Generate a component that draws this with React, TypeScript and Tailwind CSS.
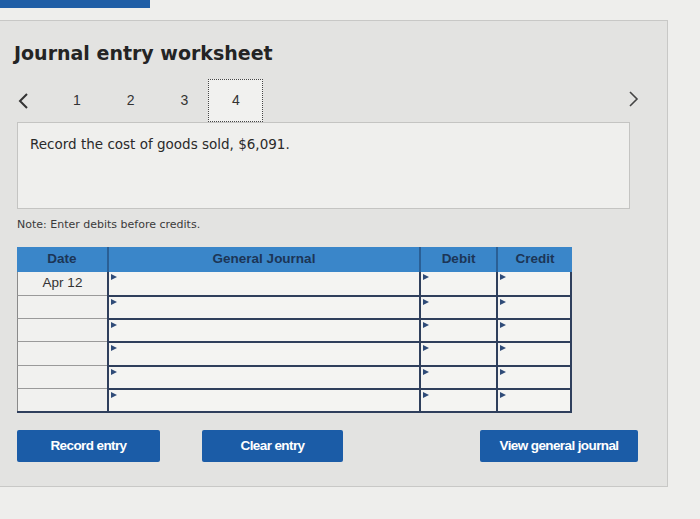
import React from 'react'

const ROWS = [0, 1, 2, 3, 4, 5]

function Flag() {
  return (
    <span className="absolute left-[2px] top-[2px] w-0 h-0 border-t-[3px] border-b-[3px] border-l-[6px] border-t-transparent border-b-transparent border-l-[#2f4b78]" />
  )
}

export default function App() {
  return (
    <div className="w-[700px] h-[519px] bg-[#eeeeec] overflow-hidden relative font-['DejaVu_Sans',sans-serif] text-[#2b2b2b]">
      {/* top bar */}
      <div className="w-[150px] h-[8px] bg-[#1f5ea6]" />

      {/* panel */}
      <div className="mt-[12px] w-[668px] h-[467px] bg-[#e3e3e1] border-t border-r border-b border-[#c8c8c6]">
        <h1 className="pl-[14px] pt-[18px] text-[19px] font-bold leading-[28px] text-[#242424]">Journal entry worksheet</h1>

        {/* tabs */}
        <div className="mt-[12px] h-[43px] flex items-center relative">
          <svg width="12" height="18" viewBox="0 0 12 18" className="ml-[17px]">
            <path d="M10 2 L3 9 L10 16" fill="none" stroke="#333" strokeWidth="2" />
          </svg>
          <span className="ml-[44px] text-[14px] font-['Liberation_Sans',sans-serif] text-[#333]">1</span>
          <span className="ml-[46px] text-[14px] font-['Liberation_Sans',sans-serif] text-[#333]">2</span>
          <span className="ml-[46px] text-[14px] font-['Liberation_Sans',sans-serif] text-[#333]">3</span>
          <div className="ml-[20px] w-[55px] h-[43px] border border-dotted border-[#444] bg-[#f1f1ef] flex items-center justify-center text-[14px] font-['Liberation_Sans',sans-serif] text-[#333]">4</div>
          <svg width="12" height="18" viewBox="0 0 12 18" className="absolute left-[628px] top-[11px]">
            <path d="M2 2 L9 9 L2 16" fill="none" stroke="#444" strokeWidth="1.6" />
          </svg>
        </div>

        {/* prompt */}
        <div className="ml-[17px] w-[613px] h-[87px] bg-[#efefed] border border-[#c4c4c2] pl-[12px] pt-[11px] text-[13.5px] text-[#2a2a2a]">
          Record the cost of goods sold, $6,091.
        </div>

        <p className="ml-[17px] mt-[8px] text-[11px] text-[#3a3a3a]">Note: Enter debits before credits.</p>

        {/* table */}
        <div className="ml-[17px] mt-[13px] w-[555px] font-['Liberation_Sans',sans-serif]">
          <div className="grid grid-cols-[90px_312px_77px_76px] h-[25px] bg-[#3a86c9] text-[13.5px] font-bold text-[#1c3556]">
            <div className="flex items-center justify-center">Date</div>
            <div className="flex items-center justify-center border-l-2 border-[#2a5f95]">General Journal</div>
            <div className="flex items-center justify-center border-l-2 border-[#2a5f95]">Debit</div>
            <div className="flex items-center justify-center border-l-2 border-[#2a5f95]">Credit</div>
          </div>
          <div className="border-b-2 border-[#2f3f5c]">
            {ROWS.map(i => (
              <div key={i} className="grid grid-cols-[90px_312px_77px_76px] h-[23.3px]">
                <div className={`bg-[#f1f1ef] border-l border-[#8a8a8a] ${i > 0 ? 'border-t border-t-[#9a9a9a]' : ''} flex items-center justify-center text-[13.5px] text-[#333]`}>
                  {i === 0 ? 'Apr 12' : ''}
                </div>
                <div className={`relative bg-[#f4f4f2] border-l-2 border-[#2f3f5c] ${i > 0 ? 'border-t-2' : ''}`}><Flag /></div>
                <div className={`relative bg-[#f4f4f2] border-l-2 border-[#2f3f5c] ${i > 0 ? 'border-t-2' : ''}`}><Flag /></div>
                <div className={`relative bg-[#f4f4f2] border-l-2 border-r-2 border-[#2f3f5c] ${i > 0 ? 'border-t-2' : ''}`}><Flag /></div>
              </div>
            ))}
          </div>
        </div>

        {/* buttons */}
        <div className="mt-[17px] flex items-start font-['Liberation_Sans',sans-serif]">
          <button className="ml-[17px] w-[143px] h-[32px] bg-[#1b5ca7] text-white text-[13.5px] font-bold tracking-[-0.6px] rounded-[2px]">Record entry</button>
          <button className="ml-[42px] w-[141px] h-[32px] bg-[#1b5ca7] text-white text-[13.5px] font-bold tracking-[-0.6px] rounded-[2px]">Clear entry</button>
          <button className="ml-[137px] w-[158px] h-[32px] bg-[#1b5ca7] text-white text-[13.5px] font-bold tracking-[-0.6px] rounded-[2px]">View general journal</button>
        </div>
      </div>
    </div>
  )
}
